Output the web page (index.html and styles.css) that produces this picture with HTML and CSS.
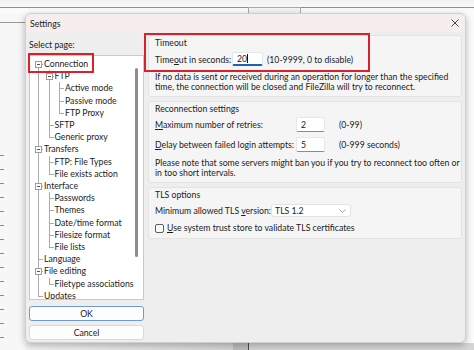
FILE: index.html
```html
<!DOCTYPE html>
<html lang="en">
<head>
    <meta charset="UTF-8">
    <title>Settings</title>
    <link rel="stylesheet" href="styles.css">
</head>
<body>
    <div class="app-top">
        <div class="rule rule-left"></div>
        <div class="tab"></div>
        <div class="rule rule-right"></div>
    </div>
    <div class="stage">
        <div class="side">
            <div class="side-line"></div>
            <div class="ticks">
                <span></span><span></span><span></span><span></span><span></span><span></span>
                <span></span><span></span><span></span><span></span><span></span><span></span>
                <span></span><span></span>
            </div>
        </div>
        <div class="window-col">
            <div class="dialog">
                <div class="titlebar">
                    <span>Settings</span>
                    <svg class="close" width="8" height="8" viewBox="0 0 8 8">
                        <path d="M0.5 0.5 L7.5 7.5 M7.5 0.5 L0.5 7.5" stroke="#333" stroke-width="0.9" fill="none"/>
                    </svg>
                </div>
                <div class="dialog-body">
                    <div class="pages">
                        <div class="pages-label">Select page:</div>
                        <div class="tree-box">
                            <ul class="tree">
                                <li><span class="exp"></span>Connection
                                    <ul>
                                        <li><span class="exp"></span>FTP
                                            <ul>
                                                <li>Active mode</li>
                                                <li>Passive mode</li>
                                                <li>FTP Proxy</li>
                                            </ul>
                                        </li>
                                        <li>SFTP</li>
                                        <li>Generic proxy</li>
                                    </ul>
                                </li>
                                <li><span class="exp"></span>Transfers
                                    <ul>
                                        <li>FTP: File Types</li>
                                        <li>File exists action</li>
                                    </ul>
                                </li>
                                <li><span class="exp"></span>Interface
                                    <ul>
                                        <li>Passwords</li>
                                        <li>Themes</li>
                                        <li>Date/time format</li>
                                        <li>Filesize format</li>
                                        <li>File lists</li>
                                    </ul>
                                </li>
                                <li>Language</li>
                                <li><span class="exp"></span>File editing
                                    <ul>
                                        <li>Filetype associations</li>
                                    </ul>
                                </li>
                                <li>Updates</li>
                            </ul>
                            <div class="scroll"><div class="thumb"></div></div>
                        </div>
                        <div class="btn btn-default">OK</div>
                        <div class="btn">Cancel</div>
                    </div>

                    <div class="panel">
                        <div class="group group-timeout">
                            <div class="group-title">Timeout</div>
                            <div class="row">
                                <span class="label label-timeout">Time<u>o</u>ut in seconds:</span>
                                <span class="field field-focus field-timeout">20<span class="caret"></span></span>
                                <span class="hint hint-timeout">(10-9999, 0 to disable)</span>
                            </div>
                            <p class="note note-timeout">If no data is sent or received during an operation for longer than the specified<br>time, the connection will be closed and FileZilla will try to reconnect.</p>
                        </div>

                        <div class="group group-reconnect">
                            <div class="group-title">Reconnection settings</div>
                            <div class="row row-first">
                                <span class="label label-reconnect"><u>M</u>aximum number of retries:</span>
                                <span class="field field-small">2</span>
                                <span class="hint">(0-99)</span>
                            </div>
                            <div class="row row-second">
                                <span class="label label-reconnect"><u>D</u>elay between failed login attempts:</span>
                                <span class="field field-small">5</span>
                                <span class="hint">(0-999 seconds)</span>
                            </div>
                            <p class="note note-spaced">Please note that some servers might ban you if you try to reconnect too often or<br>in too short intervals.</p>
                        </div>

                        <div class="group group-tls">
                            <div class="group-title">TLS options</div>
                            <div class="row">
                                <span class="label label-tls">Minimum allowed TLS <u>v</u>ersion:</span>
                                <span class="select">TLS 1.2
                                    <svg class="chevron" width="7" height="4" viewBox="0 0 7 4">
                                        <path d="M0.5 0.5 L3.5 3.5 L6.5 0.5" stroke="#9a9a9a" stroke-width="0.9" fill="none"/>
                                    </svg>
                                </span>
                            </div>
                            <div class="row row-check">
                                <span class="check"></span>
                                <span><u>U</u>se system trust store to validate TLS certificates</span>
                            </div>
                        </div>
                    </div>
                </div>

                <!-- annotation boxes drawn over the screenshot -->
                <div class="mark mark-timeout"></div>
                <div class="mark mark-conn"></div>
            </div>
            <div class="app-bottom">
                <div class="bottom-light"></div>
                <div class="bottom-block"></div>
                <div class="bottom-line"></div>
                <div class="bottom-grey"></div>
            </div>
        </div>
    </div>
</body>
</html>
```

FILE: styles.css
```css
body {
    margin: 0;
    width: 474px;
    height: 350px;
    overflow: hidden;
    background: #fbfbfb;
    font-family: Lato, 'Noto Sans', sans-serif;
    font-size: 8.7px;
    color: #1b1b1b;
}

/* app window behind the dialog */
.app-top {
    height: 13px;
    padding-top: 7px;
    box-sizing: border-box;
    display: flex;
    background: linear-gradient(#f2f2f2, #fdfdfd);
}
.rule {
    border-top: 1px solid #8f8f8f;
}
.rule-left {
    width: 248px;
}
.tab {
    width: 53px;
    height: 6px;
    border: 1px solid #a9a9a9;
    border-bottom: none;
    background: #f4f4f4;
    box-sizing: border-box;
}
.rule-right {
    flex: 1;
}
.stage {
    display: flex;
    height: 337px;
}
.side {
    width: 25px;
    background: #f7f7f7;
}
.side-line {
    margin-top: 9px;
    border-top: 1px solid #9a9a9a;
}
.ticks {
    margin-top: 132px;
    display: flex;
    flex-direction: column;
    gap: 13px;
}
.ticks span {
    display: block;
    width: 4px;
    border-top: 1px solid #8a8a8a;
}
.window-col {
    width: 449px;
    display: flex;
    flex-direction: column;
}

/* dialog */
.dialog {
    position: relative;
    width: 441px;
    height: 330px;
    box-sizing: border-box;
    background: #eeeeee;
    border: 1px solid #cfcfcf;
    border-radius: 6px;
    box-shadow: 0 2px 7px rgba(0, 0, 0, 0.28);
    overflow: hidden;
    white-space: nowrap;
}
.titlebar {
    height: 18px;
    background: #f6eeee;
    display: flex;
    align-items: center;
    justify-content: space-between;
    padding: 0 6px 0 4px;
}
.dialog-body {
    display: flex;
    gap: 4px;
    padding: 3px 3px 0 3px;
}

.pages {
    width: 115px;
}
.pages-label {
    margin-top: 4px;
    line-height: 12px;
}
.tree-box {
    margin-top: 4px;
    height: 245px;
    box-sizing: border-box;
    background: #fff;
    border: 1px solid #c9c9c9;
    display: flex;
    overflow: hidden;
}
.tree, .tree ul {
    list-style: none;
    margin: 0;
    padding: 0;
}
.tree {
    flex: 1;
    min-width: 0;
    padding: 2px 0 0 4px;
}
.tree ul {
    margin-left: 0.5px;
}
.tree li {
    position: relative;
    padding-left: 10px;
    line-height: 12.2px;
}
.tree li::before {
    content: "";
    position: absolute;
    left: 4px;
    top: 0;
    bottom: 0;
    border-left: 1px solid #ababab;
}
.tree > li:first-child::before {
    top: 6px;
}
.tree li:last-child::before {
    bottom: auto;
    height: 6px;
}
.tree li::after {
    content: "";
    position: absolute;
    left: 4px;
    top: 6px;
    width: 5px;
    border-top: 1px solid #ababab;
}
.exp {
    position: absolute;
    left: 1px;
    top: 3px;
    width: 7px;
    height: 7px;
    box-sizing: border-box;
    border: 1px solid #9c9c9c;
    background: #fff;
    z-index: 1;
}
.exp::after {
    content: "";
    position: absolute;
    left: 1px;
    top: 2px;
    width: 3px;
    height: 1px;
    background: #555;
}
.scroll {
    width: 8px;
    flex-shrink: 0;
    padding-top: 12px;
}
.thumb {
    width: 3px;
    height: 189px;
    border-radius: 2px;
    background: #8d8d8d;
}

.btn {
    height: 15px;
    margin-top: 6px;
    box-sizing: border-box;
    border: 1px solid #dadada;
    border-radius: 3px;
    background: #fdfdfd;
    text-align: center;
    line-height: 13px;
}
.btn + .btn {
    margin-top: 4px;
}
.btn-default {
    border-color: #6e9ad3;
}

/* right side */
.panel {
    width: 314px;
    display: flex;
    flex-direction: column;
    gap: 4px;
}
.group {
    background: #f5f5f5;
    border: 1px solid #e3e3e3;
    border-radius: 3px;
    padding: 2px 6px 0 6px;
    box-sizing: border-box;
}
.group-title {
    line-height: 10px;
}
.group-timeout {
    height: 62px;
}
.group-reconnect {
    height: 82px;
}
.group-tls {
    height: 52px;
}
.row {
    display: flex;
    align-items: center;
    margin-top: 4px;
}
.row-first {
    margin-top: 3px;
}
.row-second {
    margin-top: 5px;
}
.row-check {
    margin-top: 6px;
    line-height: 10px;
}
.label {
    flex-shrink: 0;
}
.label-timeout {
    width: 77px;
}
.label-reconnect {
    width: 141px;
}
.label-tls {
    width: 116px;
}
.field {
    height: 14px;
    flex-shrink: 0;
    box-sizing: border-box;
    background: #fff;
    border: 1px solid #e6e6e6;
    border-bottom-color: #8c8c8c;
    border-radius: 2px;
    padding-left: 4px;
    line-height: 12px;
    display: flex;
    align-items: center;
}
.field-timeout {
    width: 31px;
}
.field-focus {
    border-bottom: 2px solid #1a63b8;
}
.caret {
    width: 1px;
    height: 9px;
    background: #111;
}
.field-small {
    width: 29px;
    height: 15px;
}
.hint {
    margin-left: 14px;
}
.hint-timeout {
    margin-left: 4px;
}
.note {
    margin: 4px 0 0;
    line-height: 10px;
}
.note-timeout {
    margin-top: 6px;
}
.note-spaced {
    margin-top: 6px;
}
.select {
    width: 80px;
    height: 13px;
    box-sizing: border-box;
    background: #fff;
    border: 1px solid #e2e2e2;
    border-radius: 3px;
    padding: 0 4px 0 3px;
    display: flex;
    align-items: center;
    justify-content: space-between;
}
.check {
    width: 9px;
    height: 9px;
    box-sizing: border-box;
    border: 1px solid #5e5e5e;
    border-radius: 2px;
    background: #fafafa;
    margin-right: 3px;
}

/* red annotation boxes */
.mark {
    position: absolute;
    border: 2px solid #d9212b;
    box-sizing: border-box;
}
.mark-timeout {
    left: 118px;
    top: 19px;
    width: 226px;
    height: 39px;
}
.mark-conn {
    left: 2px;
    top: 39px;
    width: 66px;
    height: 20px;
}

.app-bottom {
    flex: 1;
    display: flex;
}
.bottom-light {
    width: 208px;
    background: linear-gradient(to right, #f0f0f0, #d2d2d2);
}
.bottom-block {
    width: 15px;
    background: #bcbcbc;
}
.bottom-line {
    width: 1px;
    background: #4a4a4a;
}
.bottom-grey {
    flex: 1;
    background: #d4d4d4;
}
```
